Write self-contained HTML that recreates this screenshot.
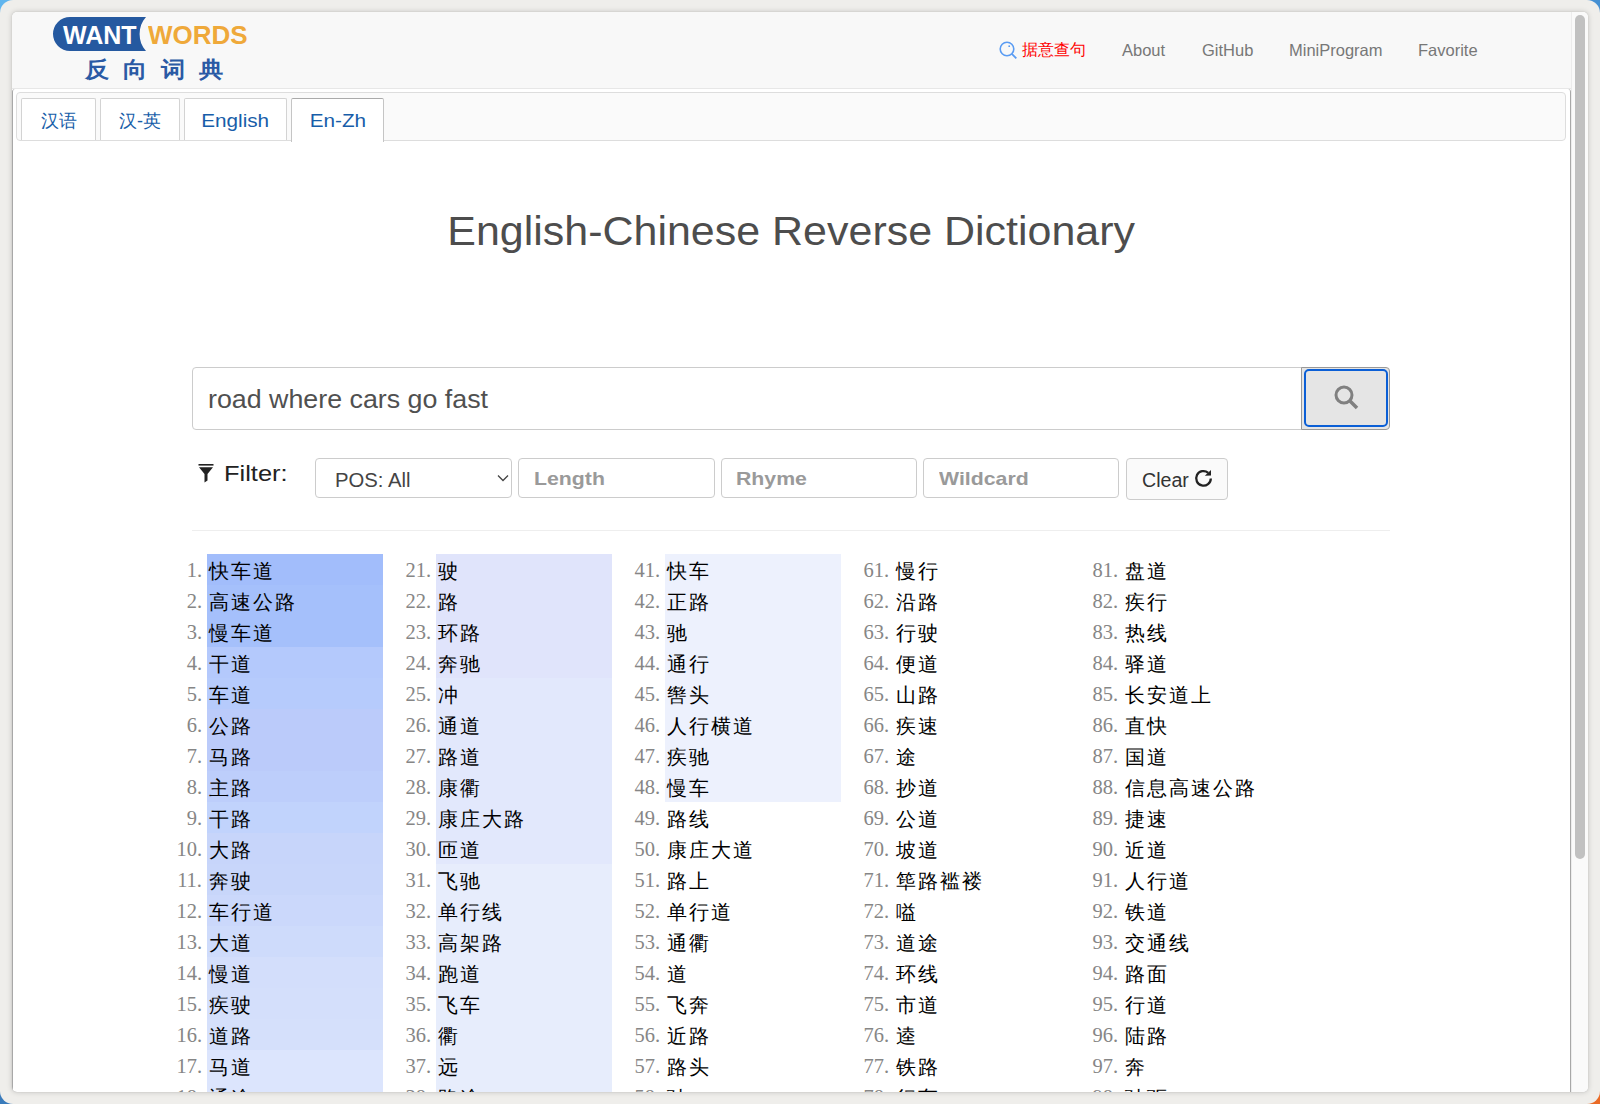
<!DOCTYPE html>
<html><head><meta charset="utf-8">
<style>
*{box-sizing:border-box}
html,body{margin:0;padding:0;width:1600px;height:1104px;overflow:hidden;background:#4a98e0;font-family:"Liberation Sans",sans-serif}
.a{position:absolute;white-space:nowrap}
#orange{position:absolute;right:0;bottom:0;width:40px;height:40px;background:#ea6a25}
#blue2{position:absolute;left:0;bottom:0;width:40px;height:40px;background:#3a7bbb}
#tl{position:absolute;left:0;top:0;width:40px;height:40px;background:#60b5ee}
#tr{position:absolute;right:0;top:0;width:40px;height:40px;background:#4590d3}
#frame{position:absolute;left:0;top:0;width:1600px;height:1104px;background:#efeeeb;border-radius:13px}
#win{position:absolute;left:12px;top:12px;width:1576px;height:1080px;background:#fff;border-radius:5px;overflow:hidden;box-shadow:0 0 1px 0 rgba(0,0,0,.25),0 0 5px 1px rgba(0,0,0,.13)}
#header{position:absolute;left:0;top:0;width:1559px;height:77px;background:#f8f8f8;border-bottom:1px solid #e7e7e7}
#track{position:absolute;left:1559px;top:0;width:17px;height:1080px;background:#fafafa;border-left:1px solid #ececec}
#thumb{position:absolute;left:1563px;top:3px;width:10px;height:844px;background:#c1c1c1;border-radius:5px}
#content{position:absolute;left:0;top:77px;width:1559px;height:1003px;border-left:1px solid #a8a8a8;border-right:1px solid #a8a8a8;border-top-left-radius:3px;border-top-right-radius:3px}
.nav{font-size:16.5px;color:#777;line-height:20px}
.tabbar{left:4px;top:80px;width:1550px;height:49px;background:#fafafa;border:1px solid #ddd;border-radius:4px}
.tab{top:86px;height:42px;background:#fff;border:1px solid #d3d3d3;border-bottom:none;border-radius:2px 2px 0 0;color:#175da9;font-size:18px;text-align:center;line-height:44px}
.tab.act{height:44px;border-color:#aaa #c5c5c5}
.inp{border:1px solid #ccc;border-radius:4px;background:#fff;height:40px;top:446px}
.ph{color:#9a9a9a;font-weight:bold;font-size:19px;line-height:40px;transform:scaleX(1.12);transform-origin:0 0}
.sx{display:inline-block;transform:scaleX(1.09);font-size:19px}
.hl{position:absolute;width:176px;height:31px}
.num{position:absolute;width:75px;text-align:right;font-family:"Liberation Serif",serif;font-size:20.5px;color:#868686;line-height:31px}
.wd{position:absolute;font-size:20px;color:#000;line-height:31px;letter-spacing:2.1px;white-space:nowrap}
</style></head><body>
<div id="orange"></div><div id="blue2"></div><div id="tl"></div><div id="tr"></div>
<div id="frame"></div>
<div id="win">
  <div id="header">
    <svg class="a" style="left:0;top:0" width="260" height="77" viewBox="12 12 260 77">
      <path d="M70 17 H146 C137.5 26 137.5 42 146 51 H70 A17 17 0 0 1 70 17 Z" fill="#2559a0"/>
    </svg>
    <div class="a" style="left:51px;top:8px;font-size:25px;font-weight:bold;color:#fff;line-height:30px">WANT</div>
    <div class="a" style="left:136px;top:8px;font-size:25px;font-weight:bold;color:#efa93a;line-height:30px;transform:scaleX(1.04);transform-origin:0 0">WORDS</div>
    <div class="a" style="left:73px;top:45px;font-size:22px;font-weight:bold;color:#2a5aa5;line-height:26px;letter-spacing:12.4px;transform:scaleX(1.1);transform-origin:0 0">反向词典</div>
    <svg class="a" style="left:987px;top:29px" width="19" height="19" viewBox="0 0 19 19">
      <circle cx="8" cy="8" r="6.8" fill="none" stroke="#5a9cf3" stroke-width="1.6"/>
      <circle cx="10.2" cy="5.2" r="0.9" fill="#5a9cf3"/>
      <path d="M12.8 12.8 L17.3 17.3" stroke="#5a9cf3" stroke-width="1.8"/>
    </svg>
    <div class="a" style="left:1010px;top:28px;font-size:16px;color:#f00;line-height:20px">据意查句</div>
    <div class="a nav" style="left:1110px;top:28px">About</div>
    <div class="a nav" style="left:1190px;top:28px">GitHub</div>
    <div class="a nav" style="left:1277px;top:28px">MiniProgram</div>
    <div class="a nav" style="left:1406px;top:28px">Favorite</div>
  </div>
  <div id="content"></div>
  <div class="a tabbar"></div>
  <div class="a tab" style="left:9px;width:75px">汉语</div>
  <div class="a tab" style="left:88px;width:80px">汉-英</div>
  <div class="a tab" style="left:172px;width:103px"><span class="sx">English</span></div>
  <div class="a tab act" style="left:279px;width:93px"><span class="sx">En-Zh</span></div>

  <div class="a" style="left:0;top:196px;width:1559px;text-align:center;font-size:40.5px;color:#4d4d4d;line-height:46px"><span style="display:inline-block;transform:scaleX(1.061)">English-Chinese Reverse Dictionary</span></div>

  <div class="a" style="left:180px;top:355px;width:1110px;height:63px;border:1px solid #ccc;border-radius:4px 0 0 4px;background:#fff"></div>
  <div class="a" style="left:196px;top:371px;font-size:25px;color:#505050;line-height:32px;transform:scaleX(1.072);transform-origin:0 0">road where cars go fast</div>
  <div class="a" style="left:1289px;top:355px;width:89px;height:63px;border:1px solid #999;border-radius:0 4px 4px 0;background:#e5e5e5"></div>
  <div class="a" style="left:1292px;top:357px;width:84px;height:58px;border:2px solid #0b5fd6;border-radius:5px"></div>
  <svg class="a" style="left:1320px;top:371px" width="28" height="28" viewBox="0 0 28 28">
    <circle cx="12" cy="12" r="8" fill="none" stroke="#808080" stroke-width="3"/>
    <path d="M17.5 17.5 L25 25" stroke="#808080" stroke-width="3.5"/>
  </svg>

  <svg class="a" style="left:186px;top:452px" width="16" height="19" viewBox="0 0 16 19">
    <rect x="0.5" y="0" width="15" height="1.6" fill="#222"/>
    <path d="M1 3.2 H15 L9.5 10 V16.5 L6.5 18.5 V10 Z" fill="#222"/>
  </svg>
  <div class="a" style="left:212px;top:447px;font-size:22.5px;color:#222;line-height:30px;transform:scaleX(1.131);transform-origin:0 0">Filter:</div>
  <div class="a inp" style="left:303px;width:197px"></div>
  <div class="a" style="left:323px;top:454px;font-size:19.5px;color:#444;line-height:28px;transform:scaleX(1.04);transform-origin:0 0">POS: All</div>
  <svg class="a" style="left:485px;top:462px" width="12" height="8" viewBox="0 0 12 8"><path d="M1 1.5 L6 6.5 L11 1.5" fill="none" stroke="#444" stroke-width="1.3"/></svg>
  <div class="a inp" style="left:506px;width:197px"></div>
  <div class="a ph" style="left:522px;top:447px">Length</div>
  <div class="a inp" style="left:709px;width:196px"></div>
  <div class="a ph" style="left:724px;top:447px">Rhyme</div>
  <div class="a inp" style="left:911px;width:196px"></div>
  <div class="a ph" style="left:927px;top:447px">Wildcard</div>
  <div class="a" style="left:1114px;top:446px;width:102px;height:42px;border:1px solid #ccc;border-radius:4px;background:#fafafa"></div>
  <div class="a" style="left:1130px;top:453px;font-size:20px;color:#333;line-height:30px;transform:scaleX(0.98);transform-origin:0 0">Clear</div>
  <svg class="a" style="left:1180px;top:455px" width="22" height="22" viewBox="0 0 22 22">
    <path d="M18.8 11.4 A7.3 7.3 0 1 1 16.2 5.8" fill="none" stroke="#222" stroke-width="2.3"/>
    <path d="M19 2.9 L12.8 8.7 L19 8.5 Z" fill="#222"/>
  </svg>

  <div class="a" style="left:180px;top:518px;width:1198px;height:1px;background:#eee"></div>
<div class="hl" style="left:195px;top:542px;background:#a2bdfb"></div>
<div class="num" style="left:115px;top:543px">1.</div>
<div class="wd" style="left:197px;top:544px">快车道</div>
<div class="hl" style="left:195px;top:573px;background:#a5c0fb"></div>
<div class="num" style="left:115px;top:574px">2.</div>
<div class="wd" style="left:197px;top:575px">高速公路</div>
<div class="hl" style="left:195px;top:604px;background:#a5c0fb"></div>
<div class="num" style="left:115px;top:605px">3.</div>
<div class="wd" style="left:197px;top:606px">慢车道</div>
<div class="hl" style="left:195px;top:635px;background:#b4c9fc"></div>
<div class="num" style="left:115px;top:636px">4.</div>
<div class="wd" style="left:197px;top:637px">干道</div>
<div class="hl" style="left:195px;top:666px;background:#b6cbfc"></div>
<div class="num" style="left:115px;top:667px">5.</div>
<div class="wd" style="left:197px;top:668px">车道</div>
<div class="hl" style="left:195px;top:697px;background:#bbcbfa"></div>
<div class="num" style="left:115px;top:698px">6.</div>
<div class="wd" style="left:197px;top:699px">公路</div>
<div class="hl" style="left:195px;top:728px;background:#bbcbfa"></div>
<div class="num" style="left:115px;top:729px">7.</div>
<div class="wd" style="left:197px;top:730px">马路</div>
<div class="hl" style="left:195px;top:759px;background:#bdcefb"></div>
<div class="num" style="left:115px;top:760px">8.</div>
<div class="wd" style="left:197px;top:761px">主路</div>
<div class="hl" style="left:195px;top:790px;background:#c1d3fc"></div>
<div class="num" style="left:115px;top:791px">9.</div>
<div class="wd" style="left:197px;top:792px">干路</div>
<div class="hl" style="left:195px;top:821px;background:#c7d5fa"></div>
<div class="num" style="left:115px;top:822px">10.</div>
<div class="wd" style="left:197px;top:823px">大路</div>
<div class="hl" style="left:195px;top:852px;background:#c8d6fa"></div>
<div class="num" style="left:115px;top:853px">11.</div>
<div class="wd" style="left:197px;top:854px">奔驶</div>
<div class="hl" style="left:195px;top:883px;background:#cbd8fb"></div>
<div class="num" style="left:115px;top:884px">12.</div>
<div class="wd" style="left:197px;top:885px">车行道</div>
<div class="hl" style="left:195px;top:914px;background:#cedbfb"></div>
<div class="num" style="left:115px;top:915px">13.</div>
<div class="wd" style="left:197px;top:916px">大道</div>
<div class="hl" style="left:195px;top:945px;background:#d3defb"></div>
<div class="num" style="left:115px;top:946px">14.</div>
<div class="wd" style="left:197px;top:947px">慢道</div>
<div class="hl" style="left:195px;top:976px;background:#d4dffb"></div>
<div class="num" style="left:115px;top:977px">15.</div>
<div class="wd" style="left:197px;top:978px">疾驶</div>
<div class="hl" style="left:195px;top:1007px;background:#d5e0fb"></div>
<div class="num" style="left:115px;top:1008px">16.</div>
<div class="wd" style="left:197px;top:1009px">道路</div>
<div class="hl" style="left:195px;top:1038px;background:#dce5fd"></div>
<div class="num" style="left:115px;top:1039px">17.</div>
<div class="wd" style="left:197px;top:1040px">马道</div>
<div class="hl" style="left:195px;top:1069px;background:#dce5fd"></div>
<div class="num" style="left:115px;top:1070px">18.</div>
<div class="wd" style="left:197px;top:1071px">通途</div>
<div class="hl" style="left:424px;top:542px;background:#e0e4fb"></div>
<div class="num" style="left:344px;top:543px">21.</div>
<div class="wd" style="left:426px;top:544px">驶</div>
<div class="hl" style="left:424px;top:573px;background:#e0e4fb"></div>
<div class="num" style="left:344px;top:574px">22.</div>
<div class="wd" style="left:426px;top:575px">路</div>
<div class="hl" style="left:424px;top:604px;background:#e0e4fb"></div>
<div class="num" style="left:344px;top:605px">23.</div>
<div class="wd" style="left:426px;top:606px">环路</div>
<div class="hl" style="left:424px;top:635px;background:#e0e4fb"></div>
<div class="num" style="left:344px;top:636px">24.</div>
<div class="wd" style="left:426px;top:637px">奔驰</div>
<div class="hl" style="left:424px;top:666px;background:#e2e8fc"></div>
<div class="num" style="left:344px;top:667px">25.</div>
<div class="wd" style="left:426px;top:668px">冲</div>
<div class="hl" style="left:424px;top:697px;background:#e2e8fc"></div>
<div class="num" style="left:344px;top:698px">26.</div>
<div class="wd" style="left:426px;top:699px">通道</div>
<div class="hl" style="left:424px;top:728px;background:#e2e8fc"></div>
<div class="num" style="left:344px;top:729px">27.</div>
<div class="wd" style="left:426px;top:730px">路道</div>
<div class="hl" style="left:424px;top:759px;background:#e2e8fc"></div>
<div class="num" style="left:344px;top:760px">28.</div>
<div class="wd" style="left:426px;top:761px">康衢</div>
<div class="hl" style="left:424px;top:790px;background:#e2e8fc"></div>
<div class="num" style="left:344px;top:791px">29.</div>
<div class="wd" style="left:426px;top:792px">康庄大路</div>
<div class="hl" style="left:424px;top:821px;background:#e2e8fc"></div>
<div class="num" style="left:344px;top:822px">30.</div>
<div class="wd" style="left:426px;top:823px">匝道</div>
<div class="hl" style="left:424px;top:852px;background:#e7edfc"></div>
<div class="num" style="left:344px;top:853px">31.</div>
<div class="wd" style="left:426px;top:854px">飞驰</div>
<div class="hl" style="left:424px;top:883px;background:#e7edfc"></div>
<div class="num" style="left:344px;top:884px">32.</div>
<div class="wd" style="left:426px;top:885px">单行线</div>
<div class="hl" style="left:424px;top:914px;background:#e7edfc"></div>
<div class="num" style="left:344px;top:915px">33.</div>
<div class="wd" style="left:426px;top:916px">高架路</div>
<div class="hl" style="left:424px;top:945px;background:#e7edfc"></div>
<div class="num" style="left:344px;top:946px">34.</div>
<div class="wd" style="left:426px;top:947px">跑道</div>
<div class="hl" style="left:424px;top:976px;background:#e7edfc"></div>
<div class="num" style="left:344px;top:977px">35.</div>
<div class="wd" style="left:426px;top:978px">飞车</div>
<div class="hl" style="left:424px;top:1007px;background:#e7edfc"></div>
<div class="num" style="left:344px;top:1008px">36.</div>
<div class="wd" style="left:426px;top:1009px">衢</div>
<div class="hl" style="left:424px;top:1038px;background:#e7edfc"></div>
<div class="num" style="left:344px;top:1039px">37.</div>
<div class="wd" style="left:426px;top:1040px">远</div>
<div class="hl" style="left:424px;top:1069px;background:#e7edfc"></div>
<div class="num" style="left:344px;top:1070px">38.</div>
<div class="wd" style="left:426px;top:1071px">路途</div>
<div class="hl" style="left:653px;top:542px;background:#edf1fd"></div>
<div class="num" style="left:573px;top:543px">41.</div>
<div class="wd" style="left:655px;top:544px">快车</div>
<div class="hl" style="left:653px;top:573px;background:#edf1fd"></div>
<div class="num" style="left:573px;top:574px">42.</div>
<div class="wd" style="left:655px;top:575px">正路</div>
<div class="hl" style="left:653px;top:604px;background:#edf1fd"></div>
<div class="num" style="left:573px;top:605px">43.</div>
<div class="wd" style="left:655px;top:606px">驰</div>
<div class="hl" style="left:653px;top:635px;background:#edf1fd"></div>
<div class="num" style="left:573px;top:636px">44.</div>
<div class="wd" style="left:655px;top:637px">通行</div>
<div class="hl" style="left:653px;top:666px;background:#edf1fd"></div>
<div class="num" style="left:573px;top:667px">45.</div>
<div class="wd" style="left:655px;top:668px">辔头</div>
<div class="hl" style="left:653px;top:697px;background:#edf1fd"></div>
<div class="num" style="left:573px;top:698px">46.</div>
<div class="wd" style="left:655px;top:699px">人行横道</div>
<div class="hl" style="left:653px;top:728px;background:#edf1fd"></div>
<div class="num" style="left:573px;top:729px">47.</div>
<div class="wd" style="left:655px;top:730px">疾驰</div>
<div class="hl" style="left:653px;top:759px;background:#edf1fd"></div>
<div class="num" style="left:573px;top:760px">48.</div>
<div class="wd" style="left:655px;top:761px">慢车</div>
<div class="num" style="left:573px;top:791px">49.</div>
<div class="wd" style="left:655px;top:792px">路线</div>
<div class="num" style="left:573px;top:822px">50.</div>
<div class="wd" style="left:655px;top:823px">康庄大道</div>
<div class="num" style="left:573px;top:853px">51.</div>
<div class="wd" style="left:655px;top:854px">路上</div>
<div class="num" style="left:573px;top:884px">52.</div>
<div class="wd" style="left:655px;top:885px">单行道</div>
<div class="num" style="left:573px;top:915px">53.</div>
<div class="wd" style="left:655px;top:916px">通衢</div>
<div class="num" style="left:573px;top:946px">54.</div>
<div class="wd" style="left:655px;top:947px">道</div>
<div class="num" style="left:573px;top:977px">55.</div>
<div class="wd" style="left:655px;top:978px">飞奔</div>
<div class="num" style="left:573px;top:1008px">56.</div>
<div class="wd" style="left:655px;top:1009px">近路</div>
<div class="num" style="left:573px;top:1039px">57.</div>
<div class="wd" style="left:655px;top:1040px">路头</div>
<div class="num" style="left:573px;top:1070px">58.</div>
<div class="wd" style="left:655px;top:1071px">驰</div>
<div class="num" style="left:802px;top:543px">61.</div>
<div class="wd" style="left:884px;top:544px">慢行</div>
<div class="num" style="left:802px;top:574px">62.</div>
<div class="wd" style="left:884px;top:575px">沿路</div>
<div class="num" style="left:802px;top:605px">63.</div>
<div class="wd" style="left:884px;top:606px">行驶</div>
<div class="num" style="left:802px;top:636px">64.</div>
<div class="wd" style="left:884px;top:637px">便道</div>
<div class="num" style="left:802px;top:667px">65.</div>
<div class="wd" style="left:884px;top:668px">山路</div>
<div class="num" style="left:802px;top:698px">66.</div>
<div class="wd" style="left:884px;top:699px">疾速</div>
<div class="num" style="left:802px;top:729px">67.</div>
<div class="wd" style="left:884px;top:730px">途</div>
<div class="num" style="left:802px;top:760px">68.</div>
<div class="wd" style="left:884px;top:761px">抄道</div>
<div class="num" style="left:802px;top:791px">69.</div>
<div class="wd" style="left:884px;top:792px">公道</div>
<div class="num" style="left:802px;top:822px">70.</div>
<div class="wd" style="left:884px;top:823px">坡道</div>
<div class="num" style="left:802px;top:853px">71.</div>
<div class="wd" style="left:884px;top:854px">筚路褴褛</div>
<div class="num" style="left:802px;top:884px">72.</div>
<div class="wd" style="left:884px;top:885px">嗌</div>
<div class="num" style="left:802px;top:915px">73.</div>
<div class="wd" style="left:884px;top:916px">道途</div>
<div class="num" style="left:802px;top:946px">74.</div>
<div class="wd" style="left:884px;top:947px">环线</div>
<div class="num" style="left:802px;top:977px">75.</div>
<div class="wd" style="left:884px;top:978px">市道</div>
<div class="num" style="left:802px;top:1008px">76.</div>
<div class="wd" style="left:884px;top:1009px">逵</div>
<div class="num" style="left:802px;top:1039px">77.</div>
<div class="wd" style="left:884px;top:1040px">铁路</div>
<div class="num" style="left:802px;top:1070px">78.</div>
<div class="wd" style="left:884px;top:1071px">行车</div>
<div class="num" style="left:1031px;top:543px">81.</div>
<div class="wd" style="left:1113px;top:544px">盘道</div>
<div class="num" style="left:1031px;top:574px">82.</div>
<div class="wd" style="left:1113px;top:575px">疾行</div>
<div class="num" style="left:1031px;top:605px">83.</div>
<div class="wd" style="left:1113px;top:606px">热线</div>
<div class="num" style="left:1031px;top:636px">84.</div>
<div class="wd" style="left:1113px;top:637px">驿道</div>
<div class="num" style="left:1031px;top:667px">85.</div>
<div class="wd" style="left:1113px;top:668px">长安道上</div>
<div class="num" style="left:1031px;top:698px">86.</div>
<div class="wd" style="left:1113px;top:699px">直快</div>
<div class="num" style="left:1031px;top:729px">87.</div>
<div class="wd" style="left:1113px;top:730px">国道</div>
<div class="num" style="left:1031px;top:760px">88.</div>
<div class="wd" style="left:1113px;top:761px">信息高速公路</div>
<div class="num" style="left:1031px;top:791px">89.</div>
<div class="wd" style="left:1113px;top:792px">捷速</div>
<div class="num" style="left:1031px;top:822px">90.</div>
<div class="wd" style="left:1113px;top:823px">近道</div>
<div class="num" style="left:1031px;top:853px">91.</div>
<div class="wd" style="left:1113px;top:854px">人行道</div>
<div class="num" style="left:1031px;top:884px">92.</div>
<div class="wd" style="left:1113px;top:885px">铁道</div>
<div class="num" style="left:1031px;top:915px">93.</div>
<div class="wd" style="left:1113px;top:916px">交通线</div>
<div class="num" style="left:1031px;top:946px">94.</div>
<div class="wd" style="left:1113px;top:947px">路面</div>
<div class="num" style="left:1031px;top:977px">95.</div>
<div class="wd" style="left:1113px;top:978px">行道</div>
<div class="num" style="left:1031px;top:1008px">96.</div>
<div class="wd" style="left:1113px;top:1009px">陆路</div>
<div class="num" style="left:1031px;top:1039px">97.</div>
<div class="wd" style="left:1113px;top:1040px">奔</div>
<div class="num" style="left:1031px;top:1070px">98.</div>
<div class="wd" style="left:1113px;top:1071px">驰驱</div>
  <div id="track"></div>
  <div id="thumb"></div>
</div>
</body></html>
